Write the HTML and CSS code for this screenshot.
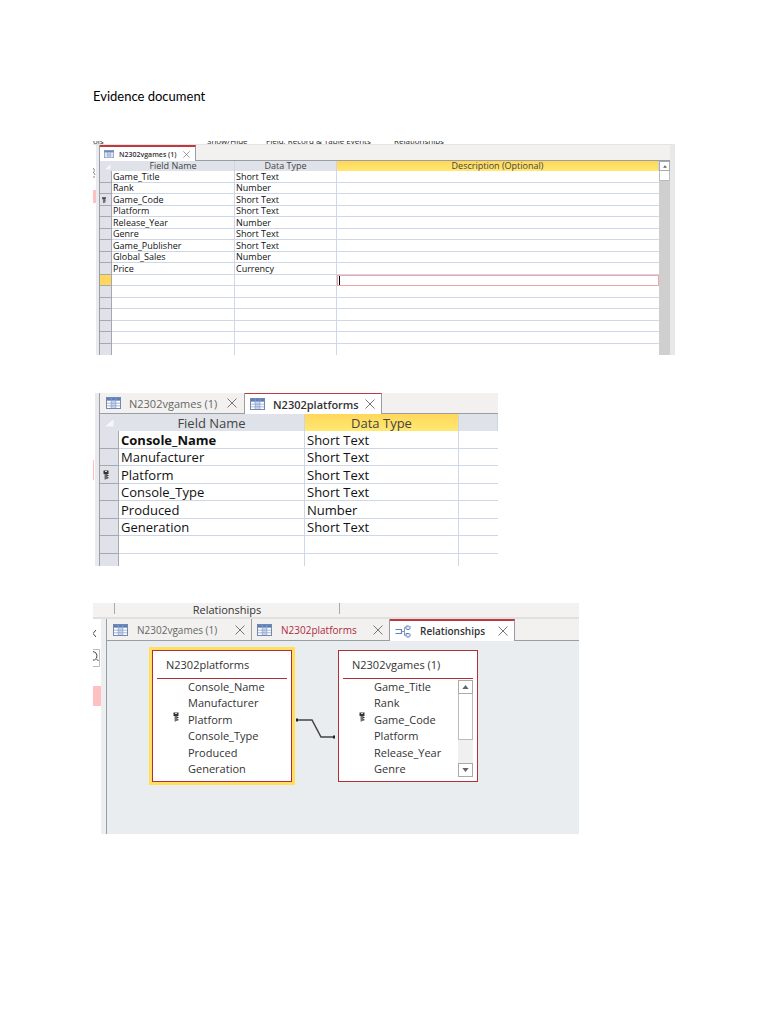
FILE: index.html
```html
<!DOCTYPE html>
<html lang="en">
<head>
    <meta charset="UTF-8">
    <meta name="viewport" content="width=device-width, initial-scale=1.0">
    <title>Evidence document</title>
    <link rel="stylesheet" href="styles.css">
</head>
<body>
    <!-- Shared icons -->
    <svg class="defs" width="0" height="0" aria-hidden="true">
        <symbol id="icon-table" viewBox="0 0 15 12">
            <rect x="0.5" y="0.5" width="14" height="11" fill="#fff" stroke="#7487ad"/>
            <rect x="1" y="1" width="13" height="2.5" fill="#5d7fc0"/>
            <path d="M5.2 3.5h4.6V11H5.2z" fill="#c5d6f2"/>
            <path d="M1 3.5h13M1 6.2h13M1 8.8h13M5.2 1v10M9.8 1v10" stroke="#8fa3c8" stroke-width="0.8"/>
        </symbol>
        <symbol id="icon-close" viewBox="0 0 10 10">
            <path d="M0.5 0.5l9 9M9.5 0.5l-9 9" stroke="#777" fill="none"/>
        </symbol>
        <symbol id="icon-key" viewBox="0 0 6 10">
            <path d="M0.5 0.5h5v3.5h-5z" fill="#333"/>
            <path d="M2 1.5h2" stroke="#fff" stroke-width="0.8"/>
            <path d="M2.2 4v5.5M3.8 4v5M4 5.5h1.5M4 7.8h1.5" stroke="#333" fill="none"/>
        </symbol>
        <symbol id="icon-corner" viewBox="0 0 10 9">
            <path d="M10 0v9H0z" fill="#f4f7fa" stroke="#c9d3df" stroke-width="0.5"/>
        </symbol>
        <symbol id="icon-links" viewBox="0 0 16 13">
            <path d="M0.5 4.5h6v4h-6" fill="none" stroke="#5a82c8" stroke-width="1.2"/>
            <path d="M6.5 6.5h3M9.5 2.500v8M9.500 2.500h1M9.500 10.500h1" fill="none" stroke="#8b95a5"/>
            <path d="M11 1h4v3.500h-4zM11 8.500h4v3.500h-4z" fill="#dfe9fa" stroke="#5a82c8" stroke-dasharray="3 1"/>
        </symbol>
        <symbol id="icon-up" viewBox="0 0 8 5"><path d="M0 5h8L4 0z" fill="#666"/></symbol>
        <symbol id="icon-down" viewBox="0 0 8 5"><path d="M0 0h8L4 5z" fill="#666"/></symbol>
    </svg>

    <main class="page">
        <p class="title">Evidence document</p>

        <!-- Games table design -->
        <section class="shot games">
            <div class="ribbon-cut">
                <span>ols</span>
                <span>Show/Hide</span>
                <span>Field, Record &amp; Table Events</span>
                <span>Relationships</span>
            </div>
            <div class="body">
                <div class="pane">
                    <svg class="pane-icons" viewBox="0 0 3 45" aria-hidden="true">
                        <path d="M0 23a3 3 0 0 1 0 5M1 28l1 2M0 32h2" stroke="#888" fill="none"/>
                    </svg>
                    <div class="pink"></div>
                </div>
                <div class="window">
                    <div class="tabs">
                        <div class="tab active">
                            <button class="tab-name"><svg class="table-icon"><use href="#icon-table"/></svg>N2302vgames (1)</button>
                            <button class="close" aria-label="Close N2302vgames (1)"><svg><use href="#icon-close"/></svg></button>
                        </div>
                    </div>
                    <div class="sheet">
                        <table>
                            <colgroup><col class="col-select"><col class="col-name"><col class="col-type"><col></colgroup>
                            <thead>
                                <tr><th class="corner"><svg><use href="#icon-corner"/></svg></th><th>Field Name</th><th>Data Type</th><th class="current">Description (Optional)</th></tr>
                            </thead>
                            <tbody>
                                <tr><td></td><td>Game_Title</td><td>Short Text</td><td></td></tr>
                                <tr><td></td><td>Rank</td><td>Number</td><td></td></tr>
                                <tr><td><svg class="key"><use href="#icon-key"/></svg></td><td>Game_Code</td><td>Short Text</td><td></td></tr>
                                <tr><td></td><td>Platform</td><td>Short Text</td><td></td></tr>
                                <tr><td></td><td>Release_Year</td><td>Number</td><td></td></tr>
                                <tr><td></td><td>Genre</td><td>Short Text</td><td></td></tr>
                                <tr><td></td><td>Game_Publisher</td><td>Short Text</td><td></td></tr>
                                <tr><td></td><td>Global_Sales</td><td>Number</td><td></td></tr>
                                <tr><td></td><td>Price</td><td>Currency</td><td></td></tr>
                                <tr class="editing"><td></td><td></td><td></td><td class="edit-cell"><input type="text" aria-label="Description"></td></tr>
                                <tr><td></td><td></td><td></td><td></td></tr>
                                <tr><td></td><td></td><td></td><td></td></tr>
                                <tr><td></td><td></td><td></td><td></td></tr>
                                <tr><td></td><td></td><td></td><td></td></tr>
                                <tr><td></td><td></td><td></td><td></td></tr>
                                <tr class="last"><td></td><td></td><td></td><td></td></tr>
                            </tbody>
                        </table>
                        <div class="scrollbar">
                            <button aria-label="Scroll up"><svg><use href="#icon-up"/></svg></button>
                            <div class="thumb"></div>
                        </div>
                    </div>
                </div>
                <div class="edge"></div>
            </div>
        </section>

        <!-- Platforms table design -->
        <section class="shot platforms">
            <div class="body">
                <div class="pane"><div class="pink"></div></div>
                <div class="window">
                    <div class="tabs">
                        <div class="tab first">
                            <button class="tab-name"><svg class="table-icon"><use href="#icon-table"/></svg>N2302vgames (1)</button>
                            <button class="close" aria-label="Close N2302vgames (1)"><svg><use href="#icon-close"/></svg></button>
                        </div>
                        <div class="tab active">
                            <button class="tab-name"><svg class="table-icon"><use href="#icon-table"/></svg>N2302platforms</button>
                            <button class="close" aria-label="Close N2302platforms"><svg><use href="#icon-close"/></svg></button>
                        </div>
                    </div>
                    <table>
                        <colgroup><col class="col-select"><col class="col-name"><col class="col-type"><col></colgroup>
                        <thead>
                            <tr><th class="corner"><svg><use href="#icon-corner"/></svg></th><th>Field Name</th><th class="current">Data Type</th><th></th></tr>
                        </thead>
                        <tbody>
                            <tr><td></td><td><b>Console_Name</b></td><td>Short Text</td><td></td></tr>
                            <tr><td></td><td>Manufacturer</td><td>Short Text</td><td></td></tr>
                            <tr><td><svg class="key"><use href="#icon-key"/></svg></td><td>Platform</td><td>Short Text</td><td></td></tr>
                            <tr><td></td><td>Console_Type</td><td>Short Text</td><td></td></tr>
                            <tr><td></td><td>Produced</td><td>Number</td><td></td></tr>
                            <tr><td></td><td>Generation</td><td>Short Text</td><td></td></tr>
                            <tr><td></td><td></td><td></td><td></td></tr>
                            <tr class="last"><td></td><td></td><td></td><td></td></tr>
                        </tbody>
                    </table>
                </div>
            </div>
        </section>

        <!-- Relationships diagram -->
        <section class="shot relations">
            <div class="ribbon"><span class="group">Relationships</span></div>
            <div class="body">
                <div class="pane">
                    <svg class="pane-icons" viewBox="0 0 8 52" aria-hidden="true">
                        <path d="M3 11l-3 3.500 3 3.500" stroke="#444" fill="none"/>
                        <path d="M0 30.500h6.500v17H0" stroke="#bbb" fill="none"/>
                        <path d="M0 32.500a4.500 4.500 0 0 1 1.500 8.500H0M3.500 40l2 2" stroke="#444" fill="none"/>
                    </svg>
                    <div class="pink"></div>
                </div>
                <div class="window">
                    <div class="tabs">
                        <div class="tab first">
                            <button class="tab-name"><svg class="table-icon"><use href="#icon-table"/></svg>N2302vgames (1)</button>
                            <button class="close" aria-label="Close N2302vgames (1)"><svg><use href="#icon-close"/></svg></button>
                        </div>
                        <div class="tab second">
                            <button class="tab-name"><svg class="table-icon"><use href="#icon-table"/></svg>N2302platforms</button>
                            <button class="close" aria-label="Close N2302platforms"><svg><use href="#icon-close"/></svg></button>
                        </div>
                        <div class="tab active">
                            <button class="tab-name"><svg class="links-icon"><use href="#icon-links"/></svg>Relationships</button>
                            <button class="close" aria-label="Close Relationships"><svg><use href="#icon-close"/></svg></button>
                        </div>
                    </div>
                    <div class="canvas">
                        <div class="card selected">
                            <h2>N2302platforms</h2>
                            <ul>
                                <li>Console_Name</li>
                                <li>Manufacturer</li>
                                <li class="primary"><svg class="key"><use href="#icon-key"/></svg>Platform</li>
                                <li>Console_Type</li>
                                <li>Produced</li>
                                <li>Generation</li>
                            </ul>
                        </div>
                        <svg class="link" viewBox="0 0 46 140" aria-hidden="true">
                            <path d="M5 70h15l9 17h14" fill="none" stroke="#444" stroke-width="1.500"/>
                            <path d="M4 68.500h2v3H4zM41 85.500h2v3h-2z" fill="#222"/>
                        </svg>
                        <div class="card">
                            <h2>N2302vgames (1)</h2>
                            <div class="fields">
                                <ul>
                                    <li>Game_Title</li>
                                    <li>Rank</li>
                                    <li class="primary"><svg class="key"><use href="#icon-key"/></svg>Game_Code</li>
                                    <li>Platform</li>
                                    <li>Release_Year</li>
                                    <li>Genre</li>
                                </ul>
                                <div class="scrollbar">
                                    <button aria-label="Scroll up"><svg><use href="#icon-up"/></svg></button>
                                    <div class="thumb"></div>
                                    <button class="down" aria-label="Scroll down"><svg><use href="#icon-down"/></svg></button>
                                </div>
                            </div>
                        </div>
                    </div>
                </div>
            </div>
        </section>
    </main>
</body>
</html>
```

FILE: styles.css
```css
* {
    box-sizing: border-box;
}

body {
    margin: 0;
    background: #fff;
    color: #222;
    font-family: "Open Sans", "Noto Sans", sans-serif;
}

.defs {
    position: absolute;
}

svg {
    display: block;
    flex: none;
}

button {
    display: flex;
    align-items: center;
    padding: 0;
    border: none;
    background: none;
    color: inherit;
    font: inherit;
    cursor: pointer;
}

.page {
    padding: 86px 93px;
}

.title {
    margin: 0 0 35px;
    color: #000;
    font-family: Lato, sans-serif;
    font-size: 13px;
    line-height: 20px;
}

.shot {
    overflow: hidden;
    max-width: 100%;
}

.body {
    display: flex;
}

.window {
    flex: 1;
    min-width: 0;
    border-left: 1px solid #9a9da3;
}

/* Left strip of the navigation pane */
.pane {
    flex: none;
    width: 6px;
    border-right: 3px solid #e9eaee;
}

.pink {
    background: #ffc0c4;
}

/* Tabs */
.tabs {
    display: flex;
    background: #f2f1f0;
    border-bottom: 1px solid #9a9da3;
}

.tab {
    display: flex;
    align-items: center;
    justify-content: space-between;
    border-right: 1px solid #9a9da3;
    color: #666;
    white-space: nowrap;
}

.tab.active {
    margin-bottom: -1px;
    border-top: 1px solid #c0393f;
    background: #fff;
    color: #333;
    font-weight: 600;
}

.close svg {
    width: 10px;
    height: 10px;
}

.table-icon {
    width: 15px;
    height: 12px;
}

/* Design grids */
table {
    width: 100%;
    border-collapse: separate;
    border-spacing: 0;
    table-layout: fixed;
    background: #fff;
    color: #111;
}

th {
    padding: 0;
    border-right: 1px solid #cdd5e4;
    background: #dfe2e8;
    color: #444;
    font-weight: 400;
}

th.current {
    background: linear-gradient(#ffd75a, #ffe873);
}

th.corner {
    border-right-color: #dfe2e8;
}

td {
    padding: 0 2px;
    border-right: 1px solid #cfd6e8;
    border-bottom: 1px solid #cfd6e8;
    white-space: nowrap;
}

td:first-child {
    padding: 0;
    border-color: #a5a8ae;
    background: #dfe2e8;
}

td:last-child {
    border-right: none;
}

.last td {
    border-bottom: none;
}

.key {
    width: 6px;
    height: 10px;
}

.scrollbar {
    flex: none;
    background: #cfcfcf;
}

.scrollbar button {
    justify-content: center;
    width: 100%;
    border: 1px solid #aaa;
    background: #fff;
}

.thumb {
    border: 1px solid #bbb;
    border-top: none;
    background: #fff;
}

/* Games */
.games {
    margin-bottom: 38px;
    font-size: 9px;
}

.ribbon-cut {
    display: grid;
    grid-template-columns: 114px 59px 128px 1fr;
    align-content: end;
    overflow: hidden;
    height: 4px;
    border-bottom: 1px solid #e4e4e4;
    font-size: 8px;
    line-height: 6px;
    white-space: nowrap;
}

.games .pane-icons {
    width: 3px;
    height: 45px;
}

.games .pink {
    width: 3px;
    height: 13px;
}

.games .edge {
    width: 5px;
    background: #e8e8e8;
}

.games .tabs {
    height: 16px;
}

.games .tab {
    width: 96px;
    padding: 0 5px 0 4px;
}

.games .tab.active {
    border-top-width: 2px;
}

.games .tab-name {
    gap: 5px;
    font-size: 7px;
}

.games .table-icon {
    width: 10px;
    height: 8px;
}

.games .close svg {
    width: 7px;
    height: 7px;
}

.sheet {
    display: flex;
}

.games .col-select {
    width: 12px;
}

.games .col-name {
    width: 123px;
}

.games .col-type {
    width: 102px;
}

.games th,
.games td {
    height: 12px;
    line-height: 10px;
}

.games td {
    padding: 0 1px;
}

.games th {
    height: 10px;
}

.games tr:nth-child(even) td {
    height: 11px;
}

.games .corner svg {
    width: 7px;
    height: 7px;
    margin-left: 4px;
}

.games .key {
    width: 4px;
    height: 8px;
    margin-left: 1px;
}

.editing td:first-child {
    background: #ffd75e;
}

.games .edit-cell {
    position: relative;
    padding: 0;
    border: none;
}

.edit-cell input {
    display: block;
    width: 100%;
    height: 11px;
    padding: 0 4px;
    border: 1px solid #f4a3a7;
    font: inherit;
    outline: none;
}

/* Text cursor */
.edit-cell::before {
    content: "";
    position: absolute;
    top: 1px;
    bottom: 1px;
    left: 2px;
    width: 1px;
    background: #000;
}

.games .scrollbar {
    width: 11px;
}

.games .scrollbar button {
    height: 10px;
}

.games .scrollbar svg {
    width: 4px;
    height: 3px;
}

.games .thumb {
    height: 10px;
}

/* Platforms */
.platforms {
    width: 405px;
    margin-bottom: 37px;
    font-size: 13px;
}

.platforms .pane {
    border-right-width: 4px;
}

.platforms .pink {
    width: 1px;
    height: 20px;
    margin-top: 67px;
}

.platforms .tabs {
    height: 21px;
}

.platforms .tab {
    width: 137px;
    padding: 0 6px 0 5px;
}

.platforms .tab.first {
    width: 145px;
    padding: 0 7px 0 6px;
}

.tab-name {
    gap: 8px;
    font-size: 11px;
}

.platforms .col-select {
    width: 19px;
}

.platforms .col-name {
    width: 186px;
}

.platforms .col-type {
    width: 154px;
}

.platforms th,
.platforms td {
    height: 18px;
    line-height: 16px;
}

.platforms th {
    height: 17px;
}

.platforms tr:nth-child(even) td {
    height: 17px;
}

.platforms tr.last:nth-child(even) td {
    height: 12px;
    line-height: 10px;
}

.platforms .corner svg {
    width: 10px;
    height: 9px;
    margin-left: 4px;
}

.platforms .key {
    margin-left: 3px;
}

/* Relationships */
.relations {
    width: 486px;
    font-size: 11px;
}

.ribbon {
    height: 14px;
    padding-left: 21px;
    background: #f3f2f1;
    color: #333;
    line-height: 14px;
    text-align: center;
}

.group {
    display: block;
    width: 226px;
    height: 11px;
    border-right: 1px solid #aaa;
    border-left: 1px solid #aaa;
}

.relations .body {
    border-top: 2px solid #e0e0e0;
}

.relations .pane {
    width: 13px;
    border-right: 5px solid #eceef0;
}

.relations .pane-icons {
    width: 8px;
    height: 52px;
}

.relations .pink {
    height: 20px;
    margin-top: 15px;
}

.relations .tabs {
    height: 22px;
}

.relations .tab {
    width: 125px;
    padding: 0 6px 0 5px;
}

.relations .tab-name {
    gap: 9px;
    font-size: 10px;
}

.relations .tab.first {
    width: 145px;
    padding-left: 6px;
}

.relations .tab.second {
    width: 138px;
    color: #b02a3c;
}

.relations .tab.active {
    border-top-width: 2px;
}

.links-icon {
    width: 16px;
    height: 13px;
}

.canvas {
    display: flex;
    align-items: flex-start;
    height: 193px;
    padding: 9px 0 0 45px;
    background: #eaedf0;
}

.card {
    flex: none;
    width: 140px;
    height: 132px;
    padding: 0 4px;
    border: 1px solid #b03038;
    background: #fff;
    color: #333;
}

.card.selected {
    outline: 3px solid #ffdf5c;
}

.link {
    width: 46px;
    height: 140px;
}

.card h2 {
    height: 28px;
    margin: 0;
    padding-left: 9px;
    border-bottom: 1px solid #b03038;
    font-size: 11px;
    font-weight: 400;
    line-height: 28px;
}

.card ul {
    flex: 1;
    margin: 0;
    padding: 0 0 0 31px;
    list-style: none;
}

.card li {
    height: 16px;
    line-height: 16px;
}

.card li:nth-child(even) {
    height: 17px;
}

.card li.primary {
    display: flex;
    gap: 9px;
    margin-left: -15px;
}

.fields {
    display: flex;
}

.relations .scrollbar {
    display: flex;
    flex-direction: column;
    width: 15px;
    height: 97px;
    margin-top: 1px;
    background: #f0f0f0;
}

.relations .scrollbar button {
    height: 14px;
}

.relations .scrollbar svg {
    width: 7px;
    height: 4px;
}

.relations .thumb {
    height: 46px;
}

.relations .down {
    margin-top: auto;
}
```
